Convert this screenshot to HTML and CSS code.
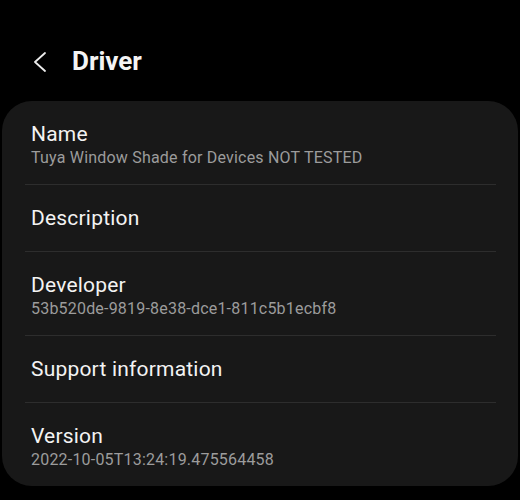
FILE: index.html
```html
<!DOCTYPE html>
<html>
<head>
<meta charset="utf-8">
<link rel="stylesheet" href="styles.css">
</head>
<body>
<div class="screen">
  <header class="topbar">
    <svg class="back" width="14" height="20" viewBox="0 0 14 20"><path d="M12 1 L2 10 L12 19" fill="none" stroke="#ececec" stroke-width="1.8" stroke-linecap="round" stroke-linejoin="round"/></svg>
    <h1 class="title">Driver</h1>
  </header>
  <section class="card">
    <div class="row two">
      <div class="label">Name</div>
      <div class="sub">Tuya Window Shade for Devices NOT TESTED</div>
    </div>
    <div class="row one">
      <div class="label">Description</div>
    </div>
    <div class="row two">
      <div class="label">Developer</div>
      <div class="sub">53b520de-9819-8e38-dce1-811c5b1ecbf8</div>
    </div>
    <div class="row one">
      <div class="label">Support information</div>
    </div>
    <div class="row two last">
      <div class="label">Version</div>
      <div class="sub">2022-10-05T13:24:19.475564458</div>
    </div>
  </section>
</div>
</body>
</html>
```
FILE: styles.css
```css
html, body {
  margin: 0;
  padding: 0;
  background: #000;
}
body {
  font-family: Roboto, "Noto Sans", sans-serif;
  color: #f2f2f2;
  width: 520px;
  height: 500px;
  overflow: hidden;
}
.screen {
  padding-top: 40px;
}
.topbar {
  display: flex;
  align-items: center;
  height: 42px;
  padding-left: 33px;
  gap: 25px;
}
.back {
  display: block;
  margin-top: 2px;
}
.title {
  margin: 0;
  font-size: 26px;
  font-weight: 700;
  line-height: 30px;
  color: #f4f4f4;
}
.card {
  margin: 19px 2px 0 2px;
  background: #181818;
  border-radius: 30px;
  padding: 0 22px 0 23px;
}
.row {
  border-bottom: 1px solid #2d2d2d;
  padding: 0 6px;
}
.row.last {
  border-bottom: none;
}
.row.two {
  padding-top: 21px;
  padding-bottom: 16px;
}
.row.one {
  padding-top: 21px;
  padding-bottom: 21px;
}
.label {
  font-size: 21px;
  line-height: 24px;
  letter-spacing: 0.2px;
  color: #f3f3f3;
}
.sub {
  margin-top: 2px;
  font-size: 16px;
  line-height: 20px;
  letter-spacing: 0.2px;
  color: #9c9c9c;
}
```
